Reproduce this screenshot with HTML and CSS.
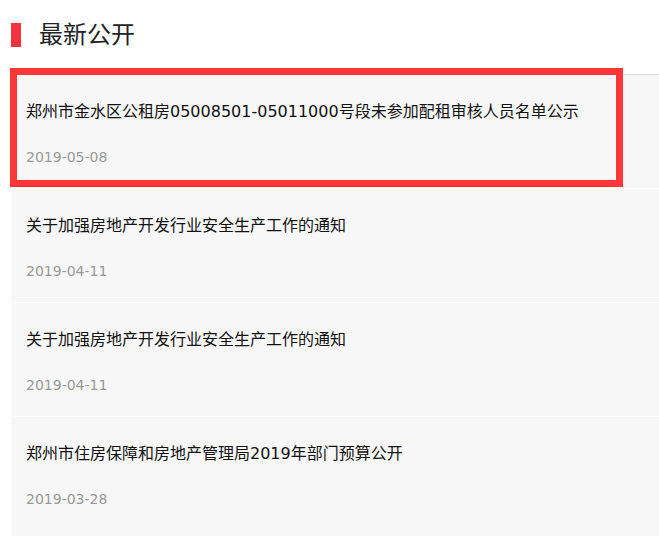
FILE: index.html
```html
<!DOCTYPE html>
<html lang="zh-CN">
<head>
    <meta charset="UTF-8">
    <meta name="viewport" content="width=device-width, initial-scale=1.0">
    <title>最新公开</title>
    <link rel="stylesheet" href="styles.css">
</head>
<body>

<div class="panel">
    <div class="panel-head">
        <span class="head-mark"></span>
        <h2>最新公开</h2>
    </div>

    <ul class="news-list">
        <li class="news-item active">
            <div class="news-title">郑州市金水区公租房05008501-05011000号段未参加配租审核人员名单公示</div>
            <div class="news-date">2019-05-08</div>
            <span class="highlight"></span>
        </li>
        <li class="news-item">
            <div class="news-title">关于加强房地产开发行业安全生产工作的通知</div>
            <div class="news-date">2019-04-11</div>
        </li>
        <li class="news-item">
            <div class="news-title">关于加强房地产开发行业安全生产工作的通知</div>
            <div class="news-date">2019-04-11</div>
        </li>
        <li class="news-item">
            <div class="news-title">郑州市住房保障和房地产管理局2019年部门预算公开</div>
            <div class="news-date">2019-03-28</div>
        </li>
    </ul>
</div>

</body>
</html>
```

FILE: styles.css
```css
body {
    margin: 0;
    background: #fff;
    font-family: "DejaVu Sans", "Noto Sans CJK SC", sans-serif;
    color: #222;
}
.panel {
    padding-left: 11px;
}
.panel-head {
    display: flex;
    align-items: center;
    height: 74px;
    padding-bottom: 4px;
    box-sizing: border-box;
}
.head-mark {
    width: 10px;
    height: 24px;
    background: #f5333f;
    margin-right: 18px;
}
.panel-head h2 {
    margin: 0;
    font-size: 24px;
    font-weight: normal;
    line-height: 24px;
    color: #222;
}
.news-list {
    list-style: none;
    margin: 0;
    padding: 0;
    border-top: 1px solid #ddd;
}
.news-item {
    position: relative;
    background: #f7f7f7;
    height: 114px;
    box-sizing: border-box;
    padding: 25px 15px 0;
    border-bottom: 1px solid #fff;
}
.news-item:last-child {
    height: 119px;
    border-bottom: none;
}
.news-title {
    font-size: 16px;
    line-height: 24px;
    color: #111;
}
.news-date {
    margin-top: 23px;
    font-size: 14px;
    line-height: 20px;
    color: #999;
}
/* red box drawn over the first item */
.highlight {
    position: absolute;
    top: -7px;
    left: -1px;
    width: 613px;
    height: 119px;
    border: 7px solid #fd363a;
    box-sizing: border-box;
}
```
